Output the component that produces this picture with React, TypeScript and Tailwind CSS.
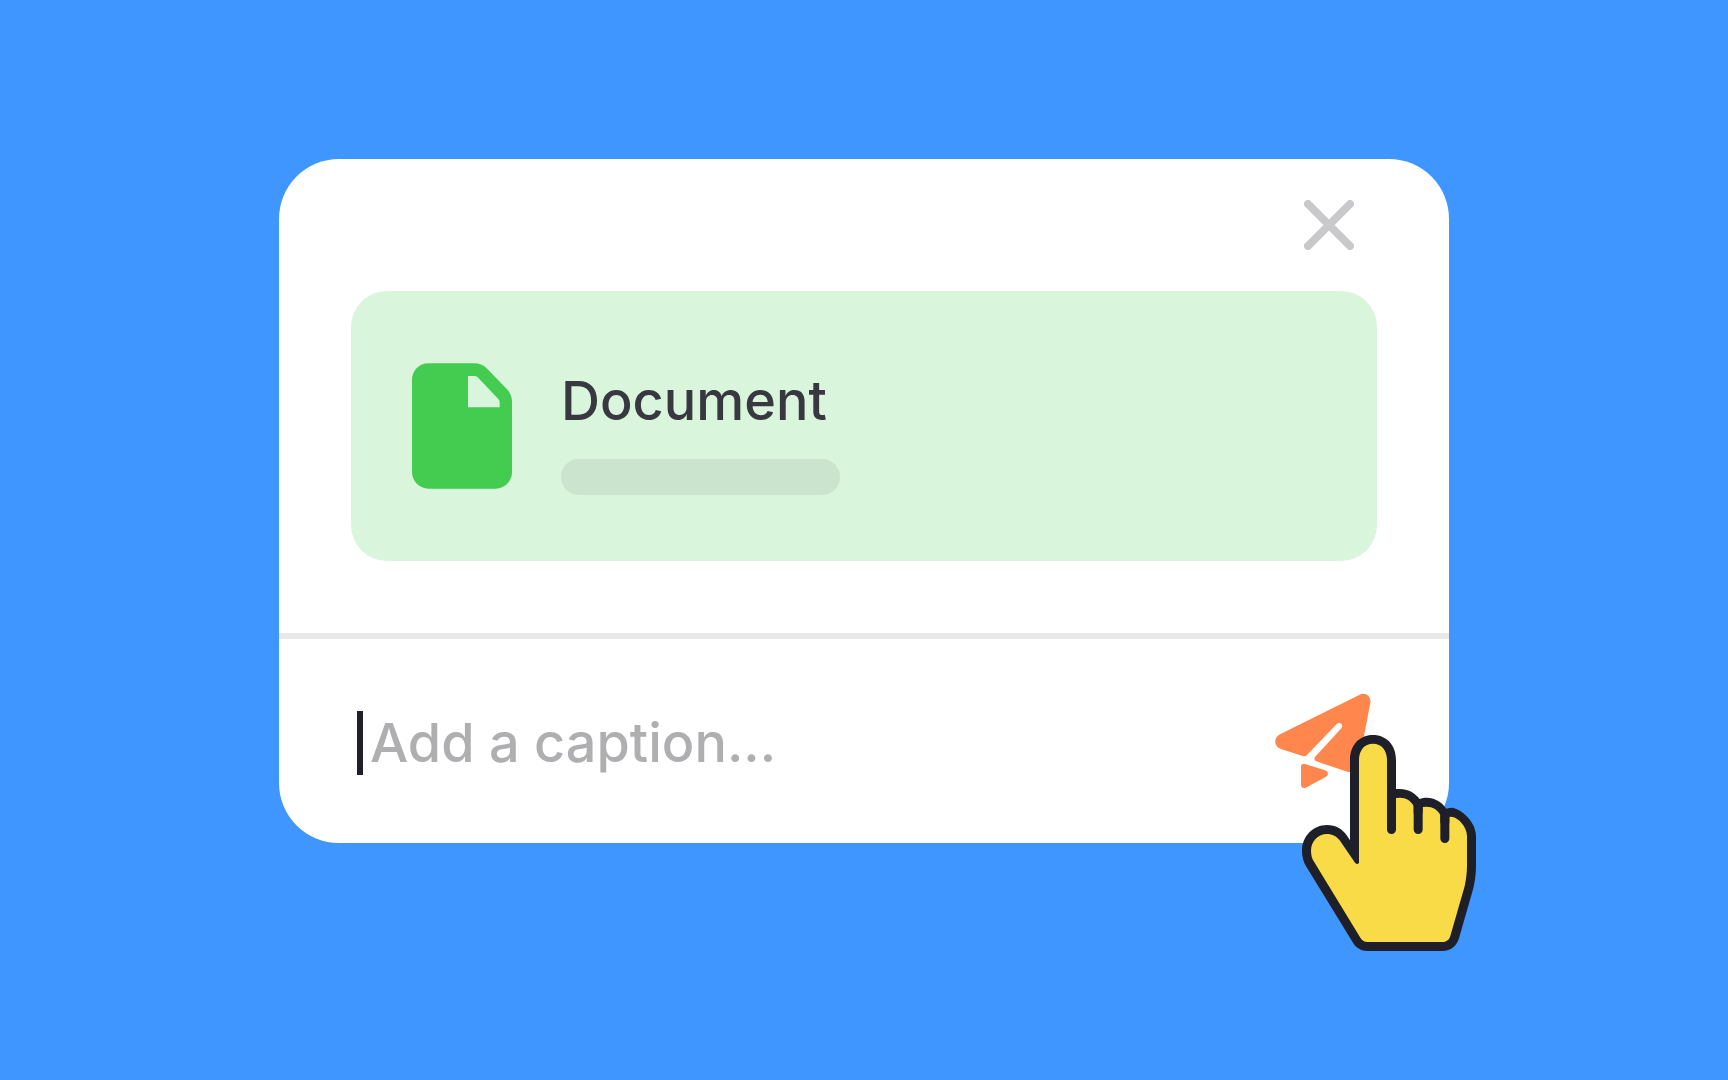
import { useState } from 'react'

function CloseIcon() {
  return (
    <svg viewBox="0 0 50 50" className="size-[50px]" fill="none" stroke="#c9c9cb" strokeWidth="8" strokeLinecap="round" aria-hidden="true">
      <path d="M4 4l42 42M46 4L4 46" />
    </svg>
  )
}

function DocumentIcon() {
  return (
    <svg viewBox="33 39 306 378" className="h-[126px] w-[102px] shrink-0" aria-hidden="true">
      <path
        fill="#43cc4f"
        fillRule="evenodd"
        d="M85 40H222C237 40 250 45 260 55L321 118C331 129 336 141 336 156V366C336 394 314 416 286 416H86C58 416 36 394 36 366V90C36 62 58 40 85 40ZM204 78V172H299V157Q299 151 295 147L233 82Q229 78 223 78Z"
      />
    </svg>
  )
}

function SendIcon() {
  return (
    <svg viewBox="27 21 324 324" className="size-[108px]" fill="#ff864d" aria-hidden="true">
      <path d="M299 44C316 36 334 49 331 68L296 253C293 271 278 280 262 275L169 244Q160 239 165 231L244 145C252 134 240 123 230 132L141 225Q135 230 128 228L63 207C41 199 40 173 60 163Z" />
      <path d="M135 252L195 271Q204 274 204 281Q204 286 198 290L137 323Q124 326 123 315V260Q124 249 135 252Z" />
    </svg>
  )
}

function HandPointer() {
  return (
    <svg viewBox="126 165 522 648" className="pointer-events-none absolute -right-[27px] -bottom-[108px] h-[216px] w-[174px]" aria-hidden="true">
      <path
        fill="#1f1f29"
        d="M339 165C381 165 408 197 408 240V327H420C443 327 464 338 479 357C486 354 492 353 500 353C524 353 545 365 559 386C565 384 571 383 576 383C602 386 648 424 648 468V555C648 585 644 605 640 625L597 775C590 798 572 813 548 813H322C303 813 289 804 280 790L140 562C131 547 126 532 126 512C126 468 160 435 201 435C227 435 247 447 261 467L270 481V240C270 197 297 165 339 165Z"
      />
      <path
        fill="#f8db46"
        d="M297 240C297 211 313 191 339 191C365 191 381 211 381 240V400H408V354Q414 353 420 353C438 353 452 361 461 378V400H488V381Q494 380 500 380C518 380 532 388 541 405V430H568V411Q572 410 577 411C594 413 621 440 621 468V555C621 580 618 600 614 619L571 768C568 779 560 786 548 786H322C313 786 307 782 302 775L163 547C156 537 153 525 153 512C153 484 175 462 201 462C217 462 230 469 239 481L284 547Q290 556 297 549Z"
      />
      <path fill="none" stroke="#1f1f29" strokeWidth="27" strokeLinecap="round" d="M394.5 345V448.5M474.5 372V448.5M554.5 402V475.5" />
    </svg>
  )
}

export default function App() {
  const [caption, setCaption] = useState('')

  return (
    <div className="min-h-screen overflow-hidden bg-[#3f96ff] px-8 pt-[159px] pb-40 font-['Inter',sans-serif] text-[54px] font-medium">
      <div className="relative mx-auto w-full max-w-[1170px] rounded-[60px] bg-white">
        <header className="flex h-[132px] items-center justify-end px-[72px]">
          <button type="button" aria-label="Close" className="flex size-24 items-center justify-center">
            <CloseIcon />
          </button>
        </header>

        <main className="px-[72px] pb-[72px]">
          <div className="flex items-center gap-12 rounded-[36px] bg-[#d9f5dc] px-[60px] py-[66px]">
            <DocumentIcon />
            <div className="flex flex-col gap-[14px]">
              <p className="leading-[88px] text-[#383840]">Document</p>
              <div className="h-9 w-[279px] rounded-full bg-[#cae4cd]" />
            </div>
          </div>
        </main>

        <form className="flex items-center border-t-6 border-[#e9e9e9] px-[72px] py-12" onSubmit={(e) => e.preventDefault()}>
          <label className="flex min-w-0 flex-1 items-center gap-[7px] pt-1 pl-1.5">
            <span className="h-16 w-1.5 shrink-0 bg-[#1f1f29]" />
            <input
              type="text"
              aria-label="Caption"
              placeholder="Add a caption..."
              value={caption}
              onChange={(e) => setCaption(e.target.value)}
              className="w-full min-w-0 leading-[84px] text-[#383840] outline-none placeholder:text-[#afafb2]"
            />
          </label>
          <button type="submit" aria-label="Send" className="shrink-0">
            <SendIcon />
          </button>
        </form>

        <HandPointer />
      </div>
    </div>
  )
}
